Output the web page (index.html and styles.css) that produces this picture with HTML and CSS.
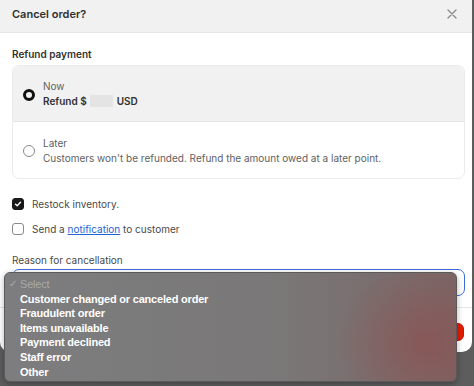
FILE: index.html
```html
<!DOCTYPE html>
<html lang="en">
<head>
    <meta charset="UTF-8">
    <meta name="viewport" content="width=device-width, initial-scale=1.0">
    <title>Cancel order</title>
    <link rel="stylesheet" href="styles.css">
</head>
<body>

<div class="modal">
    <div class="modal-header">
        <h2>Cancel order?</h2>
        <span class="close">
            <svg width="10" height="10" viewBox="0 0 10 10"><path d="M1 1L9 9M9 1L1 9" stroke="#8a8a8a" stroke-width="1.3" stroke-linecap="round"/></svg>
        </span>
    </div>

    <div class="modal-body">
        <p class="section-title">Refund payment</p>

        <div class="choice-list">
            <label class="choice selected">
                <span class="radio checked"></span>
                <span class="choice-text">
                    <span class="choice-label">Now</span>
                    <span class="choice-help strong">Refund $<span class="blank"></span>USD</span>
                </span>
            </label>
            <label class="choice">
                <span class="radio"></span>
                <span class="choice-text">
                    <span class="choice-label">Later</span>
                    <span class="choice-help">Customers won't be refunded. Refund the amount owed at a later point.</span>
                </span>
            </label>
        </div>

        <div class="check-row first">
            <span class="checkbox checked">
                <svg width="8" height="8" viewBox="0 0 8 8"><path d="M1.5 4.2L3.2 5.8L6.5 2.2" fill="none" stroke="white" stroke-width="1.4" stroke-linecap="round" stroke-linejoin="round"/></svg>
            </span>
            <span>Restock inventory.</span>
        </div>
        <div class="check-row">
            <span class="checkbox"></span>
            <span>Send a <a href="#">notification</a> to customer</span>
        </div>

        <p class="field-label">Reason for cancellation</p>
        <div class="select-wrap">
            <div class="select"></div>
            <ul class="dropdown">
                <li class="placeholder"><span class="tick">✓</span>Select</li>
                <li>Customer changed or canceled order</li>
                <li>Fraudulent order</li>
                <li>Items unavailable</li>
                <li>Payment declined</li>
                <li>Staff error</li>
                <li>Other</li>
            </ul>
        </div>
    </div>

    <div class="modal-footer">
        <button class="btn">Keep order</button>
        <button class="btn btn-danger">Cancel order</button>
    </div>
</div>

</body>
</html>
```

FILE: styles.css
```css
html {
    background: #5d5d5d;
}
body {
    margin: 0;
    min-height: 386px;
    font-family: Inter, "Noto Sans", sans-serif;
    font-size: 10px;
    color: #303030;
}
.modal {
    width: 472px;
    height: 352px;
    background: white;
    border-radius: 0 0 10px 10px;
    position: relative;
}
.modal-header {
    height: 33px;
    box-sizing: border-box;
    display: flex;
    justify-content: space-between;
    padding: 6px 12px 0 12px;
    background: #f1f1f1;
    border-bottom: 1px solid #e6e6e6;
}
.modal-header h2 {
    margin: 0;
    font-size: 11px;
    font-weight: 600;
    line-height: 16px;
}
.close {
    display: flex;
    align-items: center;
    height: 16px;
    margin-right: 3px;
}
.modal-body {
    padding: 0 7px 0 12px;
}
.section-title {
    margin: 14px 0 4px 0;
    font-weight: 600;
    line-height: 14px;
}
.choice-list {
    border: 1px solid #ebebeb;
    border-radius: 7px;
    overflow: hidden;
}
.choice {
    display: flex;
    align-items: center;
    gap: 8px;
    height: 56px;
    padding: 0 10px;
    box-sizing: border-box;
}
.choice.selected {
    background: #f1f1f1;
    border-bottom: 1px solid #e6e6e6;
}
.choice-text {
    display: flex;
    flex-direction: column;
    gap: 1px;
    line-height: 14px;
}
.choice-label {
    color: #616161;
}
.choice-help {
    color: #616161;
}
.choice-help.strong {
    color: #303030;
    font-weight: 600;
}
.blank {
    display: inline-block;
    width: 23px;
    height: 12px;
    background: #e4e4e4;
    vertical-align: -2px;
    margin: 0 4px 0 3px;
}
.radio {
    width: 12px;
    height: 12px;
    box-sizing: border-box;
    border: 1px solid #8a8a8a;
    border-radius: 50%;
    flex-shrink: 0;
    margin-top: 2px;
}
.radio.checked {
    border: 3.5px solid #111;
}
.check-row {
    display: flex;
    align-items: center;
    gap: 8px;
    height: 14px;
    color: #4a4a4a;
    margin-top: 11px;
}
.check-row.first {
    margin-top: 18px;
}
.checkbox {
    width: 12px;
    height: 12px;
    box-sizing: border-box;
    border: 1px solid #8a8a8a;
    border-radius: 3px;
    display: flex;
    align-items: center;
    justify-content: center;
}
.checkbox.checked {
    background: #1a1a1a;
    border-color: #1a1a1a;
}
a {
    color: #2463d1;
}
.field-label {
    margin: 17px 0 2px 0;
    line-height: 14px;
    color: #4a4a4a;
}
.select-wrap {
    position: relative;
}
.select {
    height: 27px;
    box-sizing: border-box;
    border: 1.5px solid #3c6be0;
    border-radius: 7px;
    background: white;
}
.dropdown {
    position: absolute;
    left: -8px;
    top: 3px;
    width: 453px;
    height: 110px;
    box-sizing: border-box;
    margin: 0;
    padding: 4px 0 0 0;
    list-style: none;
    border: 1px solid #5a5a5a;
    border-radius: 6px;
    background:
        radial-gradient(ellipse 90px 80px at 420px 70px, rgba(150, 70, 70, 0.5), rgba(150, 70, 70, 0)),
        linear-gradient(to right, #7d7d7f, #7a7878 60%, #7a6666);
    box-shadow: 0 2px 6px rgba(0, 0, 0, 0.3);
    z-index: 2;
}
.dropdown li {
    color: white;
    font-family: "Liberation Sans", Arial, sans-serif;
    font-weight: bold;
    font-size: 11px;
    letter-spacing: -0.2px;
    line-height: 14.6px;
    padding-left: 15px;
    position: relative;
}
.dropdown li.placeholder {
    color: #a9a9a9;
    font-weight: normal;
}
.tick {
    position: absolute;
    left: 4px;
    font-size: 10px;
}
.modal-footer {
    position: absolute;
    left: 0;
    right: 0;
    top: 307px;
    border-top: 1px solid #e6e6e6;
    display: flex;
    justify-content: flex-end;
    gap: 8px;
    padding: 15px 8px 0 0;
}
.btn {
    height: 18px;
    padding: 0 10px;
    border: 1px solid #ccc;
    border-radius: 6px;
    background: white;
    font-family: Inter, sans-serif;
    font-size: 10px;
    font-weight: 600;
}
.btn-danger {
    background: #e51c00;
    border-color: #c71800;
    color: white;
}
```
